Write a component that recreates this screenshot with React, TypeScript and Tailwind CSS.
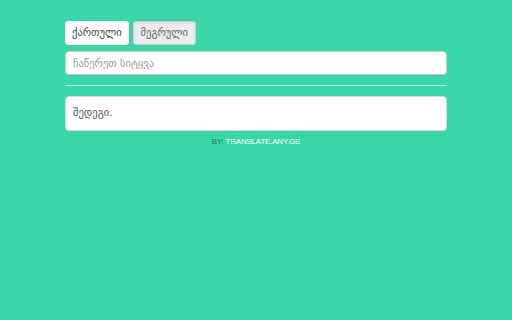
import React, { useState } from 'react';

const App: React.FC = () => {
    const [lang, setLang] = useState<'ka' | 'xmf'>('ka');
    const [text, setText] = useState('');

    return (
        <div className="min-h-screen w-full bg-[#38d6a9] font-['DejaVu_Sans',sans-serif]">
            <div className="mx-auto w-[382px] pt-[21px]">
                {/* language switch */}
                <div className="flex gap-1">
                    <button
                        onClick={() => setLang('ka')}
                        className="h-[24px] px-[6px] rounded-[3px] bg-white border border-white text-[10.5px] text-[#444]"
                    >
                        ქართული
                    </button>
                    <button
                        onClick={() => setLang('xmf')}
                        className="h-[24px] px-[7px] rounded-[3px] bg-[#ebebeb] border border-[#cfcfcf] text-[10.5px] text-[#666] shadow-[inset_0_1px_2px_rgba(0,0,0,0.08)]"
                    >
                        მეგრული
                    </button>
                </div>

                <input
                    value={text}
                    onChange={(e) => setText(e.target.value)}
                    placeholder="ჩაწერეთ სიტყვა"
                    className="mt-[6px] block w-full h-[24px] px-[7px] rounded-[4px] bg-white border border-[#ccc] text-[10.5px] text-[#333] placeholder:text-[#999] outline-none"
                />

                <div className="mt-[10px] h-px bg-[#b5f0dc]" />

                {/* result */}
                <div className="mt-[10px] h-[35px] rounded-[4px] bg-white border border-[#d8d8d8] px-[7px] pt-[8px] text-[10.5px] text-[#555]">
                    {lang === 'ka' ? 'შედეგი.' : 'შედეგი.'}
                </div>

                <div className="mt-[5px] text-center text-[8px] font-['Liberation_Sans',sans-serif] tracking-tight">
                    <span className="text-[#2a6e5a]">BY: </span>
                    <span className="text-white">TRANSLATE.ANY.GE</span>
                </div>
            </div>
        </div>
    );
};

export default App;
